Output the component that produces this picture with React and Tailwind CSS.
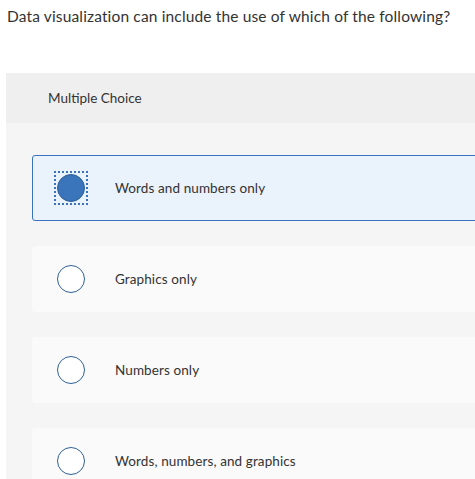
import React, { useState } from "react";

const OPTIONS = [
  "Words and numbers only",
  "Graphics only",
  "Numbers only",
  "Words, numbers, and graphics",
];

const Radio = ({ checked, focused }) => (
  <span
    className={`flex items-center justify-center w-[34px] h-[34px] ${
      focused ? "outline-2 outline-dotted outline-[#3a73b9] -outline-offset-2" : ""
    }`}
  >
    <span
      className={`block w-[28px] h-[28px] rounded-full border-[1.5px] border-[#2f6096] ${
        checked ? "bg-[#3a74ba]" : "bg-white"
      }`}
    />
  </span>
);

export default function App() {
  const [selected, setSelected] = useState(0);

  return (
    <div className="w-[475px] h-[479px] overflow-hidden bg-white font-['Lato',sans-serif] text-[#222]">
      {/* question */}
      <p className="pl-[7px] pt-[6px] text-[15.5px] leading-[20px] text-[#333] tracking-[0.15px] whitespace-nowrap">
        Data visualization can include the use of which of the following?
      </p>

      {/* panel, runs past the right edge */}
      <div className="ml-[6px] mt-[47px] w-[520px] bg-[#f5f5f5]">
        <div className="h-[50px] bg-[#efefef] flex items-center pl-[42px] text-[13.5px] text-[#333]">
          Multiple Choice
        </div>

        <div className="pl-[26px] pt-[32px] pb-[20px] flex flex-col gap-[25px]">
          {OPTIONS.map((label, i) => {
            const active = selected === i;
            return (
              <button
                key={label}
                onClick={() => setSelected(i)}
                className={`h-[66px] w-full flex items-center text-left rounded-[3px] border ${
                  active
                    ? "bg-[#eaf2fb] border-[#3a73b9]"
                    : "bg-[#fafafa] border-[#fafafa]"
                }`}
              >
                <span className="ml-[21px]">
                  <Radio checked={active} focused={active} />
                </span>
                <span className="ml-[27px] text-[13.5px] text-[#333] tracking-[0.1px]">
                  {label}
                </span>
              </button>
            );
          })}
        </div>
      </div>
    </div>
  );
}
